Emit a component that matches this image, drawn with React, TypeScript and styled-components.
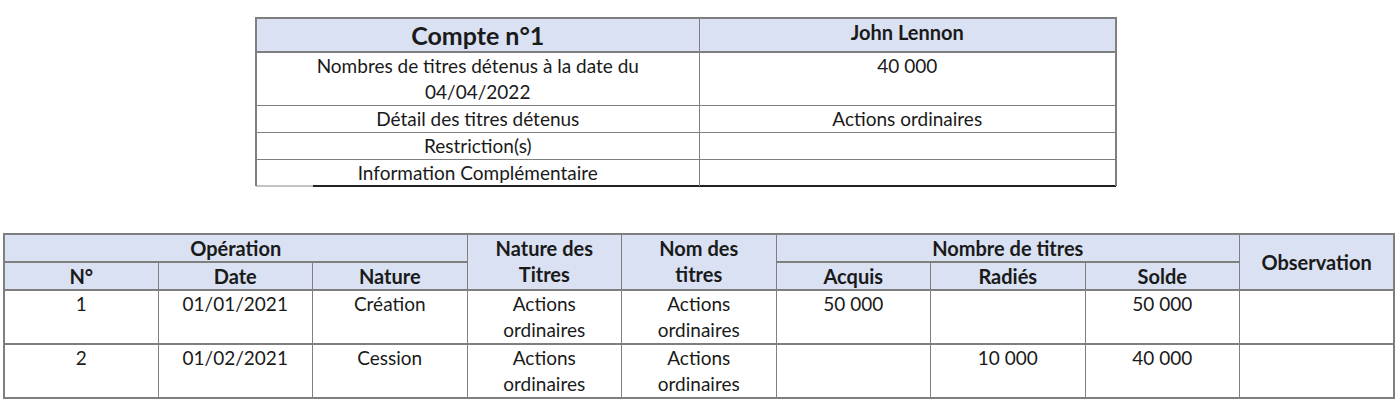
import React from "react";
import styled, {createGlobalStyle} from "styled-components";

const GlobalStyle = createGlobalStyle`
  body {
    margin: 0;
    background: #ffffff;
    font-family: Lato, "Open Sans", sans-serif;
    color: #1a1a1a;
  }
`;

const HEAD_BG = "#d9e1f2";
const LINE = "#7f7f7f";

interface Operation {
  num: string;
  date: string;
  nature: string;
  natureTitres: string;
  nomTitres: string;
  acquis: string;
  radies: string;
  solde: string;
  observation: string;
}

const OPERATIONS: Operation[] = [
  {
    num: "1",
    date: "01/01/2021",
    nature: "Création",
    natureTitres: "Actions ordinaires",
    nomTitres: "Actions ordinaires",
    acquis: "50 000",
    radies: "",
    solde: "50 000",
    observation: ""
  },
  {
    num: "2",
    date: "01/02/2021",
    nature: "Cession",
    natureTitres: "Actions ordinaires",
    nomTitres: "Actions ordinaires",
    acquis: "",
    radies: "10 000",
    solde: "40 000",
    observation: ""
  }
];

export default function App() {
  return (
    <Page>
      <GlobalStyle />
      <AccountTable>
        <colgroup>
          <col style={{width: 443}} />
          <col style={{width: 417}} />
        </colgroup>
        <tbody>
          <tr>
            <HeadCell $big>Compte n°1</HeadCell>
            <HeadCell>John Lennon</HeadCell>
          </tr>
          <tr>
            <Cell>
              Nombres de titres détenus à la date du
              <br />
              04/04/2022
            </Cell>
            <Cell>40 000</Cell>
          </tr>
          <tr>
            <Cell>Détail des titres détenus</Cell>
            <Cell>Actions ordinaires</Cell>
          </tr>
          <tr>
            <Cell>Restriction(s)</Cell>
            <Cell />
          </tr>
          <tr>
            <LastCell $partial>Information Complémentaire</LastCell>
            <LastCell />
          </tr>
        </tbody>
      </AccountTable>

      <OperationsTable>
        <colgroup>
          {Array.from({length: 9}).map((_, i) => (
            <col key={i} style={{width: i === 0 ? 154 : 154.5}} />
          ))}
        </colgroup>
        <thead>
          <tr>
            <HeadCell colSpan={3}>Opération</HeadCell>
            <HeadCell rowSpan={2}>
              Nature des
              <br />
              Titres
            </HeadCell>
            <HeadCell rowSpan={2}>
              Nom des
              <br />
              titres
            </HeadCell>
            <HeadCell colSpan={3}>Nombre de titres</HeadCell>
            <HeadCell rowSpan={2} $middle>
              Observation
            </HeadCell>
          </tr>
          <tr>
            <HeadCell>N°</HeadCell>
            <HeadCell>Date</HeadCell>
            <HeadCell>Nature</HeadCell>
            <HeadCell>Acquis</HeadCell>
            <HeadCell>Radiés</HeadCell>
            <HeadCell>Solde</HeadCell>
          </tr>
        </thead>
        <tbody>
          {OPERATIONS.map(op => (
            <tr key={op.num}>
              <DataCell>{op.num}</DataCell>
              <DataCell>{op.date}</DataCell>
              <DataCell>{op.nature}</DataCell>
              <DataCell>{op.natureTitres}</DataCell>
              <DataCell>{op.nomTitres}</DataCell>
              <DataCell>{op.acquis}</DataCell>
              <DataCell>{op.radies}</DataCell>
              <DataCell>{op.solde}</DataCell>
              <DataCell>{op.observation}</DataCell>
            </tr>
          ))}
        </tbody>
      </OperationsTable>
    </Page>
  );
}

const Page = styled.div`
  padding: 17px 0 0 3px;
  display: flex;
  flex-direction: column;
  align-items: flex-start;
  gap: 45px;
`;

const BaseTable = styled.table`
  border-collapse: collapse;
  table-layout: fixed;
  font-size: 19px;
  line-height: 26px;
  border-left: 2px solid ${LINE};
  border-right: 2px solid ${LINE};
  border-top: 2px solid ${LINE};
`;

const AccountTable = styled(BaseTable)`
  width: 860px;
  margin-left: 252px;
`;

const OperationsTable = styled(BaseTable)`
  width: 1390px;
  border-bottom: 2px solid ${LINE};
`;

const HeadCell = styled.th<{$big?: boolean; $middle?: boolean}>`
  background: ${HEAD_BG};
  border: 1px solid ${LINE};
  border-width: 0 1px 2px 1px;
  padding: 0 4px;
  font-weight: 700;
  font-size: ${p => (p.$big ? "25px" : "20px")};
  line-height: ${p => (p.$big ? "32px" : "26px")};
  text-align: center;
  vertical-align: ${p => (p.$middle ? "middle" : "top")};
  white-space: nowrap;
`;

const Cell = styled.td`
  border: 1px solid ${LINE};
  padding: 0 4px;
  height: 26px;
  text-align: center;
  vertical-align: top;
`;

const LastCell = styled(Cell)<{$partial?: boolean}>`
  border-bottom: 2px solid transparent;
  background: ${p =>
      p.$partial
        ? "linear-gradient(to right, #c4c4c4 57px, #222 57px)"
        : "linear-gradient(#222, #222)"}
    bottom / 100% 2px no-repeat;
  background-origin: border-box;
  background-clip: border-box;
`;

const DataCell = styled.td`
  border: 1px solid ${LINE};
  border-width: 0 1px 2px 1px;
  padding: 0 22px;
  height: 52px;
  text-align: center;
  vertical-align: top;
`;
